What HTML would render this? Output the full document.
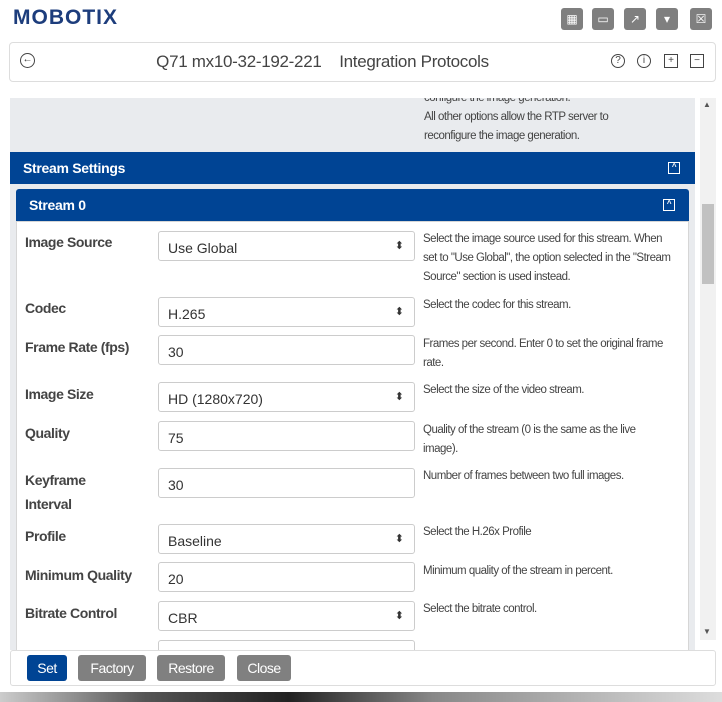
<!DOCTYPE html>
<html><head><style>
*{box-sizing:border-box;margin:0;padding:0}
body{width:722px;height:702px;overflow:hidden;background:#fff;font-family:"Liberation Sans",sans-serif;position:relative;color:#333}
.abs{position:absolute}
.logo{left:13px;top:6px;font-size:21px;font-weight:bold;color:#1d3d7c;letter-spacing:1px}
.tb{top:8px;width:22px;height:22px;background:#7f7f7f;border-radius:3px;color:#fff;font-size:12px;text-align:center;line-height:22px}
.hdr{left:9px;top:42px;width:707px;height:40px;border:1px solid #ddd;border-radius:4px}
.title{left:0;width:645px;top:52px;text-align:center;font-size:17px;color:#444;letter-spacing:-0.3px}
.ic{top:54px;width:14px;height:14px;border:1.3px solid #444;font-size:10px;line-height:11px;text-align:center;color:#444}
.gray{left:10px;top:98px;width:685px;height:552px;background:#e9ebee;overflow:hidden}
.bar{background:#004494;color:#fff;font-weight:bold;font-size:14px;padding-left:13px;line-height:32px;letter-spacing:-0.3px}
.up{width:12px;height:12px;border:1.5px solid #fff;position:absolute;top:10px;font-size:8px;line-height:8px;text-align:center}
.lbl{left:8px;font-weight:bold;font-size:14px;color:#444;line-height:24px;letter-spacing:-0.4px}
.inp{left:141px;width:257px;height:30px;border:1px solid #ccc;border-radius:3px;font-size:14px;padding:8px 0 0 9px;color:#333}
.inp.s::after{content:"\2B0D";position:absolute;right:10px;top:7px;font-size:11px}
.d{left:406px;width:248px;font-size:11.5px;color:#444;line-height:19px;letter-spacing:-0.5px}
.btn{top:655px;height:26px;border-radius:3px;color:#fff;font-size:14px;line-height:26px;text-align:center;background:#808080;letter-spacing:-0.5px}
</style></head><body>
<div class="abs logo">MOBOTIX</div>
<div class="abs tb" style="left:561px">▦</div>
<div class="abs tb" style="left:592px">▭</div>
<div class="abs tb" style="left:624px">↗</div>
<div class="abs tb" style="left:656px">▾</div>
<div class="abs tb" style="left:690px">☒</div>
<div class="abs hdr"></div>
<div class="abs" style="left:20px;top:53px;width:15px;height:15px;border:1.3px solid #444;border-radius:50%;font-size:10px;line-height:12px;text-align:center">←</div>
<div class="abs title">Q71 mx10-32-192-221 &nbsp;&nbsp; Integration Protocols</div>
<div class="abs ic" style="left:611px;border-radius:50%">?</div>
<div class="abs ic" style="left:637px;border-radius:50%">i</div>
<div class="abs ic" style="left:664px">+</div>
<div class="abs ic" style="left:690px">−</div>
<div class="abs gray">
 <div class="abs d" style="top:-9px;left:414px">configure the image generation.<br>All other options allow the RTP server to<br>reconfigure the image generation.</div>
 <div class="abs bar" style="left:0;top:54px;width:685px;height:32px">Stream Settings<span class="up" style="left:658px">^</span></div>
 <div class="abs bar" style="left:6px;top:91px;width:673px;height:32px;border-radius:3px 3px 0 0">Stream 0<span class="up" style="left:647px">^</span></div>
</div>
<div class="abs" style="left:16px;top:221px;width:673px;height:429px;background:#fff;border:1px solid #d6d6d6;border-bottom:none">
 <div class="abs lbl" style="top:8px">Image Source</div><div class="abs inp s" style="top:9px">Use Global</div>
 <div class="abs d" style="top:8px">Select the image source used for this stream. When set to "Use Global", the option selected in the "Stream Source" section is used instead.</div>
 <div class="abs lbl" style="top:74px">Codec</div><div class="abs inp s" style="top:75px">H.265</div>
 <div class="abs d" style="top:74px">Select the codec for this stream.</div>
 <div class="abs lbl" style="top:113px">Frame Rate (fps)</div><div class="abs inp" style="top:113px">30</div>
 <div class="abs d" style="top:113px">Frames per second. Enter 0 to set the original frame rate.</div>
 <div class="abs lbl" style="top:160px">Image Size</div><div class="abs inp s" style="top:160px">HD (1280x720)</div>
 <div class="abs d" style="top:159px">Select the size of the video stream.</div>
 <div class="abs lbl" style="top:199px">Quality</div><div class="abs inp" style="top:199px">75</div>
 <div class="abs d" style="top:199px">Quality of the stream (0 is the same as the live image).</div>
 <div class="abs lbl" style="top:246px">Keyframe<br>Interval</div><div class="abs inp" style="top:246px">30</div>
 <div class="abs d" style="top:245px">Number of frames between two full images.</div>
 <div class="abs lbl" style="top:302px">Profile</div><div class="abs inp s" style="top:302px">Baseline</div>
 <div class="abs d" style="top:301px">Select the H.26x Profile</div>
 <div class="abs lbl" style="top:341px">Minimum Quality</div><div class="abs inp" style="top:340px">20</div>
 <div class="abs d" style="top:340px">Minimum quality of the stream in percent.</div>
 <div class="abs lbl" style="top:379px">Bitrate Control</div><div class="abs inp s" style="top:379px">CBR</div>
 <div class="abs d" style="top:378px">Select the bitrate control.</div>
 <div class="abs inp" style="top:418px"></div>
</div>
<div class="abs" style="left:700px;top:98px;width:16px;height:542px;background:#f1f1f1"></div>
<div class="abs" style="left:702px;top:204px;width:12px;height:80px;background:#c1c1c1"></div>
<div class="abs" style="left:703px;top:100px;font-size:8px;color:#555">▲</div>
<div class="abs" style="left:703px;top:627px;font-size:8px;color:#555">▼</div>
<div class="abs" style="left:10px;top:650px;width:706px;height:36px;border:1px solid #ddd;border-radius:3px;background:#fff"></div>
<div class="abs btn" style="left:27px;width:40px;background:#004494">Set</div>
<div class="abs btn" style="left:78px;width:68px">Factory</div>
<div class="abs btn" style="left:157px;width:68px">Restore</div>
<div class="abs btn" style="left:237px;width:54px">Close</div>
<div class="abs" style="left:0;top:692px;width:722px;height:10px;background:linear-gradient(90deg,#ccc,#555 20%,#222 40%,#888 60%,#ddd)"></div>
</body></html>
